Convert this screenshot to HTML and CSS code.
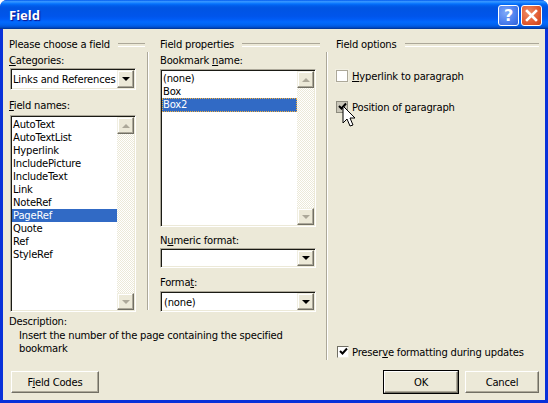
FILE: index.html
```html
<!DOCTYPE html>
<html lang="en">
<head>
    <meta charset="UTF-8">
    <title>Field</title>
    <link rel="stylesheet" href="styles.css">
</head>
<body>
    <div class="window">
        <div class="titlebar">
            <span class="title">Field</span>
            <div class="title-buttons">
                <span class="title-btn help">?</span>
                <span class="title-btn close">
                    <svg width="13" height="13" viewBox="0 0 13 13"><path d="M2 2L11 11M11 2L2 11" stroke="#fff" stroke-width="2.6" stroke-linecap="square"/></svg>
                </span>
            </div>
        </div>

        <div class="content">
            <div class="panels">
                <div class="left">
                    <div class="fields">
                        <div class="col col-choose">
                            <div class="heading"><span>Please choose a field</span></div>
                            <label class="label first"><u>C</u>ategories:</label>
                            <div class="combo combo-tall">
                                <span class="combo-value">Links and References</span>
                                <span class="sb-btn"><i class="arrow-down"></i></span>
                            </div>
                            <label class="label names-label"><u>F</u>ield names:</label>
                            <div class="listbox names-list">
                                <ul class="items">
                                    <li>AutoText</li>
                                    <li>AutoTextList</li>
                                    <li>Hyperlink</li>
                                    <li>IncludePicture</li>
                                    <li>IncludeText</li>
                                    <li>Link</li>
                                    <li>NoteRef</li>
                                    <li class="selected">PageRef</li>
                                    <li>Quote</li>
                                    <li>Ref</li>
                                    <li>StyleRef</li>
                                </ul>
                                <div class="scrollbar">
                                    <span class="sb-btn"><i class="arrow-up"></i></span>
                                    <span class="sb-btn"><i class="arrow-down-off"></i></span>
                                </div>
                            </div>
                        </div>
                        <div class="sep sep-short"></div>
                        <div class="col col-props">
                            <div class="heading"><span>Field properties</span></div>
                            <label class="label first">Bookmark <u>n</u>ame:</label>
                            <div class="listbox bookmark-list">
                                <ul class="items">
                                    <li>(none)</li>
                                    <li>Box</li>
                                    <li class="selected focused">Box2</li>
                                </ul>
                                <div class="scrollbar">
                                    <span class="sb-btn"><i class="arrow-up"></i></span>
                                    <span class="sb-btn"><i class="arrow-down-off"></i></span>
                                </div>
                            </div>
                            <label class="label numeric-label">N<u>u</u>meric format:</label>
                            <div class="combo combo-numeric">
                                <span class="combo-value"></span>
                                <span class="sb-btn"><i class="arrow-down"></i></span>
                            </div>
                            <label class="label format-label">Forma<u>t</u>:</label>
                            <div class="combo combo-format">
                                <span class="combo-value">(none)</span>
                                <span class="sb-btn"><i class="arrow-down"></i></span>
                            </div>
                        </div>
                    </div>
                    <div class="description">
                        <div>Description:</div>
                        <p>Insert the number of the page containing the specified bookmark</p>
                    </div>
                </div>
                <div class="sep sep-tall"></div>
                <div class="col col-options">
                    <div class="heading"><span>Field options</span></div>
                    <div class="check-row row-one">
                        <span class="checkbox hot"></span>
                        <span class="check-text"><u>H</u>yperlink to paragraph</span>
                    </div>
                    <div class="check-row row-two">
                        <span class="checkbox pressed">
                            <svg width="9" height="9" viewBox="0 0 9 9"><path d="M1 4L3.5 6.5L8 1.5" fill="none" stroke="#000" stroke-width="2"/></svg>
                        </span>
                        <span class="check-text">Position of <u>p</u>aragraph</span>
                    </div>
                    <div class="check-row row-three">
                        <span class="checkbox">
                            <svg width="9" height="9" viewBox="0 0 9 9"><path d="M1 4L3.5 6.5L8 1.5" fill="none" stroke="#000" stroke-width="2"/></svg>
                        </span>
                        <span class="check-text">Preser<u>v</u>e formatting during updates</span>
                    </div>
                </div>
            </div>

            <div class="footer">
                <button class="btn btn-codes">F<u>i</u>eld Codes</button>
                <div class="footer-right">
                    <button class="btn default">OK</button>
                    <button class="btn">Cancel</button>
                </div>
            </div>
        </div>

        <svg class="cursor" width="14" height="24" viewBox="0 0 14 24"><path d="M1 1V18L5 14L8 21L11 20L8 13H13Z" fill="#fff" stroke="#000" stroke-width="1"/></svg>
    </div>
</body>
</html>
```

FILE: styles.css
```css
* {
    margin: 0;
    padding: 0;
    box-sizing: border-box;
}

body {
    font-family: 'DejaVu Sans', Tahoma, sans-serif;
    font-size: 10px;
    letter-spacing: -0.2px;
    line-height: 13px;
    color: #000;
    background: #fff;
}

.window {
    position: relative;
    width: 548px;
    height: 403px;
    display: flex;
    flex-direction: column;
    background: #0831d9;
    border-radius: 7px 7px 0 0;
    overflow: hidden;
}

.titlebar {
    height: 29px;
    flex: none;
    display: flex;
    justify-content: space-between;
    padding: 5px 6px 0 9px;
    background: linear-gradient(180deg, #0058ee 0%, #3593ff 5%, #288eff 8%, #127dff 11%, #036ffc 14%, #0262ee 18%, #0057e5 24%, #0054e3 30%, #0055eb 56%, #005bf5 66%, #026afe 76%, #0062ef 86%, #0052d6 93%, #0040ab 97%, #003092 100%);
}

.title {
    color: #fff;
    font-family: 'Noto Sans', sans-serif;
    font-size: 13px;
    font-weight: bold;
    letter-spacing: 0;
    line-height: 20px;
    text-shadow: 1px 1px 1px #0f1089;
}

.title-buttons {
    display: flex;
    gap: 2px;
}

.title-btn {
    width: 21px;
    height: 21px;
    display: flex;
    align-items: center;
    justify-content: center;
    border: 1px solid #fff;
    border-radius: 3px;
    color: #fff;
    font-size: 16px;
    font-weight: bold;
}

.help {
    background: radial-gradient(circle at 35% 35%, #7fa8f8 0%, #4a7ded 60%, #2f5fd6 100%);
}

.close {
    background: radial-gradient(circle at 35% 35%, #ee8e68 0%, #e15a30 60%, #c63f16 100%);
}

.content {
    flex: 1;
    margin: 0 3px 3px;
    padding: 8px 6px 0;
    background: #ece9d8;
    display: flex;
    flex-direction: column;
}

.panels {
    display: flex;
    height: 326px;
}

.left {
    width: 311px;
    flex: none;
}

.fields {
    display: flex;
    height: 275px;
}

.col {
    display: flex;
    flex-direction: column;
}

.col-choose {
    width: 136px;
}

.col-props {
    width: 160px;
}

.col-options {
    width: 203px;
}

.heading {
    display: flex;
    gap: 8px;
    height: 13px;
    white-space: nowrap;
}

.heading span {
    padding-top: 1px;
}

.heading::after {
    content: "";
    flex: 1;
    height: 2px;
    margin-top: 6px;
    border-top: 1px solid #aca899;
    border-bottom: 1px solid #fff;
}

.sep {
    width: 2px;
    flex: none;
    margin-top: 15px;
    border-left: 1px solid #aca899;
    border-right: 1px solid #fff;
}

.sep-short {
    height: 258px;
    margin-left: 2px;
    margin-right: 11px;
}

.sep-tall {
    height: 308px;
    margin-left: 6px;
    margin-right: 8px;
}

.label {
    display: block;
    height: 13px;
}

.label.first {
    margin-top: 4px;
}

.names-label {
    margin-top: 9px;
}

.numeric-label {
    margin-top: 7px;
}

.format-label {
    margin-top: 8px;
}

.combo,
.listbox {
    display: flex;
    background: #fff;
    border: 1px solid;
    border-color: #aca899 #fff #fff #aca899;
    box-shadow: inset 1px 1px 0 #1a1a14, inset -1px -1px 0 #ece9d8;
}

.combo {
    align-items: stretch;
    justify-content: space-between;
    padding: 1px 1px 1px 0;
}

.combo-tall {
    width: 126px;
    height: 22px;
    margin: 1px 0 0 1px;
}

.combo-numeric {
    width: 156px;
    height: 20px;
    margin-top: 1px;
}

.combo-format {
    width: 156px;
    height: 21px;
    margin-top: 2px;
}

.combo-value {
    padding: 3px 0 0 3px;
    white-space: nowrap;
}

.combo-tall .combo-value {
    padding-left: 2px;
}

.sb-btn {
    width: 17px;
    height: 17px;
    flex: none;
    display: flex;
    align-items: center;
    justify-content: center;
    background: #ece9d8;
    border: 1px solid;
    border-color: #f1efe2 #716f64 #716f64 #f1efe2;
    box-shadow: inset -1px -1px 0 #aca899, inset 1px 1px 0 #fff;
}

.combo .sb-btn {
    height: auto;
}

.arrow-down,
.arrow-down-off,
.arrow-up {
    width: 0;
    height: 0;
    border-left: 4px solid transparent;
    border-right: 4px solid transparent;
}

.arrow-down {
    border-top: 4px solid #000;
}

.arrow-down-off {
    border-top: 4px solid #aca899;
}

.arrow-up {
    border-bottom: 4px solid #aca899;
}

.names-list {
    width: 126px;
    height: 197px;
    margin: 3px 0 0 1px;
    padding: 1px 1px 1px 0;
}

.bookmark-list {
    width: 156px;
    height: 158px;
    margin-top: 2px;
    padding: 1px 1px 1px 0;
}

.items {
    flex: 1;
    min-width: 0;
    list-style: none;
    padding: 1px 0 0 1px;
}

.items li {
    height: 13px;
    padding-left: 1px;
    white-space: nowrap;
}

.items .selected {
    background: #316ac5;
    color: #fff;
}

.items .focused {
    height: 14px;
    outline: 1px dotted #f0b040;
    outline-offset: -1px;
}

.scrollbar {
    width: 17px;
    flex: none;
    display: flex;
    flex-direction: column;
    justify-content: space-between;
    background: repeating-conic-gradient(#fff 0 25%, #ece9d8 0 50%) 0 0 / 2px 2px;
}

.description {
    margin-top: 3px;
}

.description p {
    padding-left: 10px;
    width: 300px;
    margin-top: 1px;
}

.check-row {
    display: flex;
    align-items: center;
    gap: 4px;
    height: 13px;
    white-space: nowrap;
}

.check-text {
    padding-top: 1px;
}

.row-one {
    margin-top: 19px;
}

.row-two {
    margin-top: 18px;
}

.row-three {
    margin-top: auto;
    margin-bottom: 5px;
    margin-left: 1px;
    gap: 3px;
}

.checkbox {
    width: 12px;
    height: 12px;
    flex: none;
    display: flex;
    align-items: center;
    justify-content: center;
    background: #fff;
    border: 1px solid #716f64;
    border-right-color: #f1efe2;
    border-bottom-color: #f1efe2;
}

.checkbox.hot {
    border-color: #aca899;
    box-shadow: 0 0 0 1px #f1efe2;
}

.checkbox.pressed {
    background: #c9c6b8;
    border-color: #8d8b7e;
}

.footer {
    display: flex;
    justify-content: space-between;
    margin-top: 8px;
    padding-left: 2px;
}

.footer-right {
    display: flex;
    gap: 7px;
}

.btn {
    width: 74px;
    height: 22px;
    font: inherit;
    letter-spacing: inherit;
    color: #000;
    background: #ece9d8;
    border: 1px solid;
    border-color: #fff #716f64 #716f64 #fff;
    box-shadow: inset -1px -1px 0 #aca899;
}

.btn-codes {
    width: 88px;
}

.btn.default {
    outline: 1px solid #000;
}

.cursor {
    position: absolute;
    left: 342px;
    top: 105px;
}
```
